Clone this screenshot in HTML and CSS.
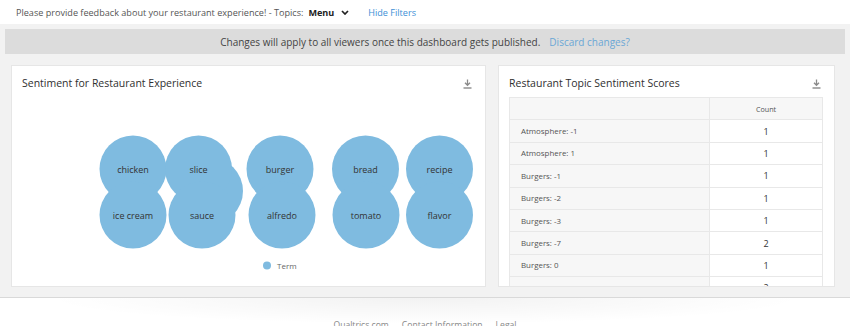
FILE: index.html
```html
<!DOCTYPE html>
<html lang="en">
<head>
<meta charset="utf-8">
<title>Dashboard</title>
<link rel="stylesheet" href="styles.css">
</head>
<body>
<header class="filters">
  <span class="prompt">Please provide feedback about your restaurant experience! - Topics:</span><span class="topic">Menu</span><svg class="chev" width="8" height="5" viewBox="0 0 8 5"><path d="M1 1 L4 4 L7 1" fill="none" stroke="#222" stroke-width="1.7"/></svg><a class="hide" href="#">Hide Filters</a>
</header>
<main class="dash">
  <div class="banner">
    <span>Changes will apply to all viewers once this dashboard gets published.</span>
    <a class="discard" href="#">Discard changes?</a>
  </div>
  <div class="cards">
    <section class="card card-left">
      <div class="card-head">
        <h2 class="card-title">Sentiment for Restaurant Experience</h2>
        <svg class="dl" width="9" height="10" viewBox="0 0 9 10"><path d="M4.5 0.5 V6 M2 3.8 L4.5 6.3 L7 3.8" fill="none" stroke="#8a8a8a" stroke-width="1.3"/><path d="M0.5 9 H8.5" stroke="#8a8a8a" stroke-width="1.4"/></svg>
      </div>
      <svg class="bubbles" width="473" height="185" viewBox="0 0 473 185">
        <g fill="#7fbbe0">
          <circle cx="121" cy="68" r="33.5"/>
          <circle cx="121" cy="114" r="33.5"/>
          <circle cx="197.5" cy="90" r="33.5"/>
          <circle cx="186.5" cy="68" r="33.5"/>
          <circle cx="190" cy="114" r="33.5"/>
          <circle cx="268" cy="68" r="33.5"/>
          <circle cx="270" cy="114" r="33.5"/>
          <circle cx="353.5" cy="68" r="33.5"/>
          <circle cx="354" cy="114" r="33.5"/>
          <circle cx="427.5" cy="68" r="33.5"/>
          <circle cx="427.5" cy="114" r="33.5"/>
        </g>
        <g class="blabel" text-anchor="middle">
          <text x="121" y="71.5">chicken</text>
          <text x="121" y="117.5">ice cream</text>
          <text x="186.5" y="71.5">slice</text>
          <text x="190" y="117.5">sauce</text>
          <text x="268" y="71.5">burger</text>
          <text x="270" y="117.5">alfredo</text>
          <text x="353.5" y="71.5">bread</text>
          <text x="354" y="117.5">tomato</text>
          <text x="427.5" y="71.5">recipe</text>
          <text x="427.5" y="117.5">flavor</text>
        </g>
        <circle cx="255" cy="164.5" r="4" fill="#7fbbe0"/>
        <text class="legend" x="265" y="167.5">Term</text>
      </svg>
    </section>
    <section class="card card-right">
      <div class="card-head head-right">
        <h2 class="card-title">Restaurant Topic Sentiment Scores</h2>
        <svg class="dl" width="9" height="10" viewBox="0 0 9 10"><path d="M4.5 0.5 V6 M2 3.8 L4.5 6.3 L7 3.8" fill="none" stroke="#8a8a8a" stroke-width="1.3"/><path d="M0.5 9 H8.5" stroke="#8a8a8a" stroke-width="1.4"/></svg>
      </div>
      <table class="scores">
        <thead>
          <tr><th class="lab"></th><th class="cnt">Count</th></tr>
        </thead>
        <tbody>
          <tr><td class="lab">Atmosphere: -1</td><td class="cnt">1</td></tr>
          <tr><td class="lab">Atmosphere: 1</td><td class="cnt">1</td></tr>
          <tr><td class="lab">Burgers: -1</td><td class="cnt">1</td></tr>
          <tr><td class="lab">Burgers: -2</td><td class="cnt">1</td></tr>
          <tr><td class="lab">Burgers: -3</td><td class="cnt">1</td></tr>
          <tr><td class="lab">Burgers: -7</td><td class="cnt">2</td></tr>
          <tr><td class="lab">Burgers: 0</td><td class="cnt">1</td></tr>
          <tr><td class="lab">Burgers: 1</td><td class="cnt">2</td></tr>
        </tbody>
      </table>
    </section>
  </div>
</main>
<footer class="foot">
  <a href="#">Qualtrics.com</a>
  <a href="#">Contact Information</a>
  <a href="#">Legal</a>
</footer>
</body>
</html>
```
FILE: styles.css
```css
* { box-sizing: border-box; }
html, body { margin: 0; padding: 0; }
body {
  width: 850px;
  height: 326px;
  overflow: hidden;
  background: #fff;
  font-family: "Open Sans", "DejaVu Sans", sans-serif;
  color: #333;
}
a { text-decoration: none; }

.filters {
  height: 24px;
  display: flex;
  align-items: center;
  padding-left: 16px;
  font-size: 9.1px;
  background: #fff;
}
.prompt { color: #555; }
.topic { color: #222; font-weight: 700; margin-left: 5px; }
.chev { margin-left: 7px; margin-top: 1px; }
.hide { color: #3d8fd6; margin-left: 19px; }

.dash {
  height: 274px;
  background: #f2f2f2;
  padding: 5px 5px 0;
  border-bottom: 1px solid #d9d9d9;
}
.banner {
  height: 25px;
  background: #dcdcdc;
  display: flex;
  align-items: center;
  justify-content: center;
  font-size: 10px;
  color: #444;
}
.discard { color: #6aa7d6; margin-left: 9px; }

.cards {
  display: grid;
  grid-template-columns: 475px 337px;
  column-gap: 12px;
  margin: 11px 0 0 6px;
}
.card {
  height: 222px;
  background: #fff;
  border: 1px solid #e6e6e6;
  overflow: hidden;
}
.card-head {
  height: 35px;
  display: flex;
  align-items: flex-start;
  justify-content: space-between;
  padding: 10px 13px 0 10px;
}
.head-right { height: 31px; }
.card-title {
  margin: 0;
  font-size: 10.5px;
  font-weight: 400;
  line-height: 15px;
  color: #2f2f2f;
}
.dl { margin-top: 3px; }

.bubbles { display: block; }
.blabel { font-size: 9px; fill: #333; font-family: "Open Sans", sans-serif; }
.legend { font-size: 8px; fill: #666; font-family: "Open Sans", sans-serif; }

.scores {
  margin: 0 10px;
  width: 314px;
  border-collapse: collapse;
  table-layout: fixed;
}
.scores th, .scores td {
  height: 22.4px;
  padding: 0;
  border: 1px solid #e8e8e8;
}
.scores .lab {
  width: 200px;
  background: #f7f7f7;
  text-align: left;
  padding-left: 11px;
  font-size: 7.9px;
  color: #555;
  font-weight: 400;
}
.scores td.cnt {
  text-align: center;
  font-size: 9px;
  color: #333;
  background: #fff;
}
.scores th.cnt {
  text-align: center;
  font-size: 7.2px;
  color: #555;
  font-weight: 400;
  background: #f7f7f7;
}

.foot {
  height: 28px;
  display: flex;
  justify-content: center;
  gap: 13px;
  padding: 21px 0 0 0;
  font-size: 8.6px;
  line-height: 12px;
  background: radial-gradient(ellipse 380px 26px at 50% 0, rgba(0,0,0,0.05), rgba(0,0,0,0) 100%), #fff;
}
.foot a { color: #888; }
```
